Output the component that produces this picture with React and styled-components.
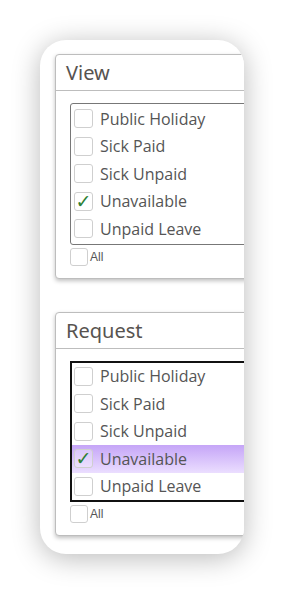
import React from 'react';
import styled, { createGlobalStyle } from 'styled-components';

const Global = createGlobalStyle`
  html, body {
    margin: 0;
    background: #fff;
  }
`;

const Page = styled.div`
  padding: 40px 0 0 40px;
  height: 595px;
  box-sizing: border-box;
`;

const Card = styled.div`
  width: 204px;
  height: 514px;
  box-sizing: border-box;
  padding: 14px 0 0 15px;
  background: #fff;
  border-radius: 26px;
  overflow: hidden;
  box-shadow: 0 4px 28px rgba(0, 0, 0, 0.28);
  display: flex;
  flex-direction: column;
  gap: 33px;
`;

const Panel = styled.section`
  width: 260px;
  flex-shrink: 0;
  background: #fff;
  border: 1px solid #bdbdbd;
  border-radius: 4px;
  box-shadow: 0 2px 4px rgba(0, 0, 0, 0.25);
`;

const Header = styled.h3`
  margin: 0;
  height: 35px;
  padding-left: 10px;
  display: flex;
  align-items: center;
  border-bottom: 1px solid #bdbdbd;
  font-family: "Noto Sans", sans-serif;
  font-weight: 400;
  font-size: 20px;
  color: #575350;
`;

const Body = styled.div`
  padding: 12px 0 12px 14px;
`;

const List = styled.ul`
  margin: 0;
  list-style: none;
  border: ${(p) => (p.$focused ? '2px solid #111' : '1px solid #777')};
  border-radius: ${(p) => (p.$focused ? '0' : '3px')};
  padding: ${(p) => (p.$focused ? '0' : '1px 0')};
`;

const Item = styled.li`
  height: 27.5px;
  display: flex;
  align-items: center;
  gap: 7px;
  padding-left: ${(p) => (p.$focused ? '2px' : '3px')};
  font-family: "Open Sans", sans-serif;
  font-size: 16px;
  color: #555;
  background: ${(p) =>
    p.$selected ? 'linear-gradient(#c5a5f7, #ebdeff)' : 'transparent'};
`;

const Box = styled.span`
  width: 17px;
  height: 17px;
  flex-shrink: 0;
  border: 1px solid #cfcfcf;
  border-radius: 3px;
  background: ${(p) => (p.$tint ? 'rgba(255,255,255,0.3)' : '#fff')};
  display: flex;
  align-items: center;
  justify-content: center;
  color: #2d7f35;
  font-size: 19px;
  font-weight: bold;
  line-height: 1;
  font-family: "DejaVu Sans", sans-serif;
`;

const AllRow = styled.label`
  margin-top: 3px;
  display: flex;
  align-items: center;
  gap: 2px;
  font-family: "Liberation Sans", Arial, sans-serif;
  font-size: 12px;
  color: #555;
`;

const AllBox = styled(Box)`
  width: 16px;
  height: 16px;
`;

const types = ['Public Holiday', 'Sick Paid', 'Sick Unpaid', 'Unavailable', 'Unpaid Leave'];

const Picker = ({ title, focused, highlight }) => (
  <Panel>
    <Header>{title}</Header>
    <Body>
      <List $focused={focused}>
        {types.map((t) => {
          const sel = t === 'Unavailable';
          return (
            <Item key={t} $focused={focused} $selected={highlight && sel}>
              <Box $tint={highlight && sel}>{sel ? '✓' : ''}</Box>
              {t}
            </Item>
          );
        })}
      </List>
      <AllRow>
        <AllBox />
        All
      </AllRow>
    </Body>
  </Panel>
);

export default function App() {
  return (
    <>
      <Global />
      <Page>
        <Card>
          <Picker title="View" />
          <Picker title="Request" focused highlight />
        </Card>
      </Page>
    </>
  );
}
